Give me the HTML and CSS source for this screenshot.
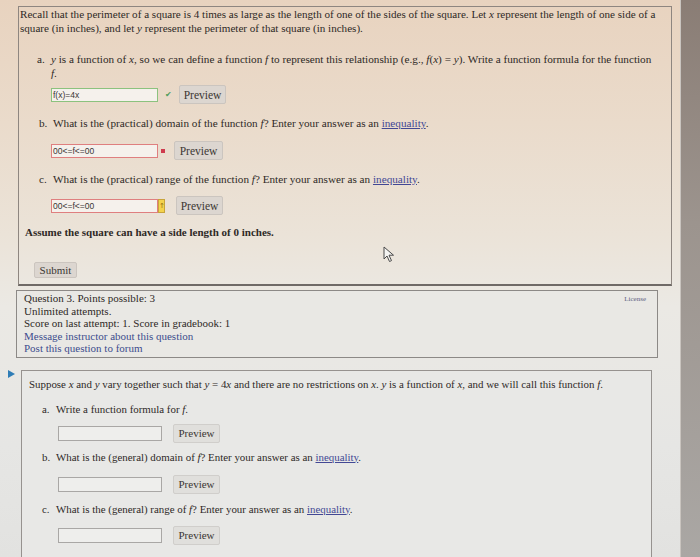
FILE: index.html
```html
<!DOCTYPE html>
<html>
<head>
<meta charset="utf-8">
<link rel="stylesheet" href="styles.css">
</head>
<body>
<div class="screen">
  <div class="panel">
    <p class="intro">Recall that the perimeter of a square is 4 times as large as the length of one of the sides of the square. Let <i>x</i> represent the length of one side of a<br>square (in inches), and let <i>y</i> represent the perimeter of that square (in inches).</p>

    <div class="part part-a">
      <span class="lbl">a.</span>
      <div class="part-body">
        <p class="ptext"><i>y</i> is a function of <i>x</i>, so we can define a function <i>f</i> to represent this relationship (e.g., <i>f</i>(<i>x</i>) = <i>y</i>). Write a function formula for the function<br><i>f</i>.</p>
      </div>
    </div>
    <div class="answer ans-a">
      <span class="field ok">f(x)=4x</span>
      <span class="mark-ok">&#10004;</span>
      <span class="btn btn-a">Preview</span>
    </div>

    <div class="part part-b">
      <span class="lbl">b.</span>
      <div class="part-body">
        <p class="ptext">What is the (practical) domain of the function <i>f</i>? Enter your answer as an <span class="link">inequality</span>.</p>
      </div>
    </div>
    <div class="answer ans-b">
      <span class="field bad">00&lt;=f&lt;=00</span>
      <span class="mark-bad"></span>
      <span class="btn btn-b">Preview</span>
    </div>

    <div class="part part-c">
      <span class="lbl">c.</span>
      <div class="part-body">
        <p class="ptext">What is the (practical) range of the function <i>f</i>? Enter your answer as an <span class="link">inequality</span>.</p>
      </div>
    </div>
    <div class="answer ans-c">
      <span class="field bad">00&lt;=f&lt;=00</span>
      <span class="mark-warn">&#8593;</span>
      <span class="btn btn-c">Preview</span>
    </div>

    <p class="note">Assume the square can have a side length of 0 inches.</p>
    <div class="submit-row"><span class="btn submit">Submit</span></div>
  </div>

  <div class="qinfo">
    <span class="license">License</span>
    <div>Question 3. Points possible: 3</div>
    <div>Unlimited attempts.</div>
    <div>Score on last attempt: 1. Score in gradebook: 1</div>
    <div class="blue">Message instructor about this question</div>
    <div class="blue">Post this question to forum</div>
  </div>

  <div class="q-row">
    <span class="arrow"></span>
    <div class="qbox">
      <p class="q-intro">Suppose <i>x</i> and <i>y</i> vary together such that <i>y</i> = 4<i>x</i> and there are no restrictions on <i>x</i>. <i>y</i> is a function of <i>x</i>, and we will call this function <i>f</i>.</p>

      <div class="part q-a">
        <span class="lbl">a.</span>
        <p class="ptext">Write a function formula for <i>f</i>.</p>
      </div>
      <div class="answer q-ans q-ans-a">
        <span class="field empty"></span>
        <span class="btn btn-q">Preview</span>
      </div>

      <div class="part q-b">
        <span class="lbl">b.</span>
        <p class="ptext">What is the (general) domain of <i>f</i>? Enter your answer as an <span class="link">inequality</span>.</p>
      </div>
      <div class="answer q-ans q-ans-b">
        <span class="field empty"></span>
        <span class="btn btn-q">Preview</span>
      </div>

      <div class="part q-c">
        <span class="lbl">c.</span>
        <p class="ptext">What is the (general) range of <i>f</i>? Enter your answer as an <span class="link">inequality</span>.</p>
      </div>
      <div class="answer q-ans q-ans-c">
        <span class="field empty"></span>
        <span class="btn btn-q">Preview</span>
      </div>
    </div>
  </div>

  <svg class="cursor" width="12" height="17" viewBox="0 0 12 17">
    <path d="M1 1 L1 13 L4 10 L6.5 15.5 L8.5 14.6 L6 9.2 L10.5 9.2 Z" fill="#f4f4f2" stroke="#4a4a4a" stroke-width="1" stroke-linejoin="round"/>
  </svg>
</div>
<div class="bezel"></div>
</body>
</html>
```

FILE: styles.css
```css
html, body {
  margin: 0;
  padding: 0;
}

body {
  width: 700px;
  height: 557px;
  overflow: hidden;
  display: flex;
  font-family: "Liberation Serif", "Times New Roman", serif;
  color: #2e2926;
}

.screen {
  position: relative;
  width: 680px;
  flex: none;
  background: linear-gradient(180deg, #e8d3bf 0%, #eadbcb 22%, #ebe3d8 42%, #ebe9e4 55%, #e6e6e4 80%, #e2e2e0 100%);
}

.bezel {
  flex: 1;
  background: linear-gradient(180deg, #8a7d75 0%, #9c948e 40%, #aaa7a4 100%);
  border-left: 1px solid #c9c4bf;
}

p {
  margin: 0;
}

i {
  font-style: italic;
}

/* ---------- first (answered) question panel ---------- */
.panel {
  margin: 6px 8px 0 18px;
  border: 1px solid #8e8680;
  border-bottom: 2px solid #6f6a67;
  padding: 0 6px 6px 1px;
  font-size: 11.2px;
  line-height: 14px;
}

.intro {
  white-space: nowrap;
  font-size: 11.1px;
}

.part {
  display: flex;
  align-items: flex-start;
}

.lbl {
  flex: none;
  width: 14px;
}

.ptext {
  white-space: nowrap;
}

.part-a {
  margin: 17px 0 0 17px;
}

.part-b {
  margin: 12px 0 0 19px;
}

.part-c {
  margin: 12px 0 0 19px;
}

.answer {
  display: flex;
  align-items: center;
  height: 19px;
}

.ans-a {
  margin: 5px 0 0 31px;
}

.ans-b {
  margin: 11px 0 0 31px;
}

.ans-c {
  margin: 10px 0 0 31px;
}

.field {
  box-sizing: border-box;
  width: 107px;
  height: 14px;
  background: #f5f1ec;
  border: 1px solid #b8b3ae;
  font-family: "Liberation Sans", Arial, sans-serif;
  font-size: 8.5px;
  line-height: 12px;
  padding-left: 1px;
  color: #3a3634;
}

.field.ok {
  border-color: #8cc27e;
}

.field.bad {
  border-color: #df7f7f;
}

.mark-ok {
  color: #4f9d5d;
  font-size: 8px;
  margin-left: 7px;
  width: 14px;
}

.mark-bad {
  width: 4px;
  height: 4px;
  background: #cf3b4d;
  margin-left: 3px;
}

.mark-warn {
  box-sizing: border-box;
  width: 7px;
  height: 14px;
  background: #f3d24c;
  border: 1px solid #c8a43a;
  color: #8b6a12;
  font-size: 7px;
  line-height: 12px;
  text-align: center;
  font-family: "DejaVu Sans", sans-serif;
}

.btn {
  box-sizing: border-box;
  display: inline-flex;
  align-items: center;
  justify-content: center;
  height: 19px;
  background: #dcd6d0;
  border: 1px solid #cbc5bf;
  border-radius: 2px;
  color: #3b3633;
  font-size: 11.5px;
}

.btn-a {
  width: 47px;
}

.btn-b {
  width: 49px;
  margin-left: 9px;
}

.btn-c {
  width: 47px;
  margin-left: 11px;
}

.link {
  color: #434894;
  text-decoration: underline;
}

.note {
  margin: 10px 0 0 5px;
  font-weight: bold;
  font-size: 11px;
}

.submit-row {
  margin: 23px 0 0 14px;
  display: flex;
}

.btn.submit {
  width: 43px;
  height: 16px;
  font-size: 11px;
}

/* ---------- question info box ---------- */
.qinfo {
  position: relative;
  margin: 4px 22px 0 16px;
  border: 1px solid #8c8986;
  padding: 1px 7px 2px 7px;
  font-size: 11px;
  line-height: 12.5px;
  background: #e9e8e4;
}

.qinfo .blue {
  color: #3c4c8d;
}

.license {
  float: right;
  font-size: 7px;
  color: #5b607f;
  margin-right: 4px;
  margin-top: 1px;
}

/* ---------- next question ---------- */
.q-row {
  display: flex;
  align-items: flex-start;
  margin-top: 12px;
  padding-left: 8px;
}

.arrow {
  flex: none;
  width: 0;
  height: 0;
  border-left: 7px solid #2f7db6;
  border-top: 4px solid transparent;
  border-bottom: 4px solid transparent;
  margin-right: 6px;
}

.qbox {
  flex: 1;
  margin-right: 28px;
  height: 200px;
  border: 1px solid #96928f;
  border-bottom: none;
  padding: 6px 0 0 7px;
  font-size: 10.9px;
  line-height: 14px;
  background: #e8e8e6;
}

.q-intro {
  white-space: nowrap;
}

.q-a {
  margin: 11px 0 0 13px;
}

.q-b {
  margin: 7px 0 0 13px;
}

.q-c {
  margin: 8px 0 0 13px;
}

.q-ans-a {
  margin: 8px 0 0 29px;
}

.q-ans-b {
  margin: 11px 0 0 29px;
}

.q-ans-c {
  margin: 10px 0 0 29px;
}

.field.empty {
  width: 104px;
  height: 15px;
  background: #eeeeec;
  border-color: #a9a7a5;
}

.btn-q {
  width: 47px;
  margin-left: 11px;
  background: #e0dfdc;
  border-color: #d0cecb;
  font-size: 11px;
}

/* mouse pointer lying over the page */
.cursor {
  position: absolute;
  left: 383px;
  top: 246px;
}
```
